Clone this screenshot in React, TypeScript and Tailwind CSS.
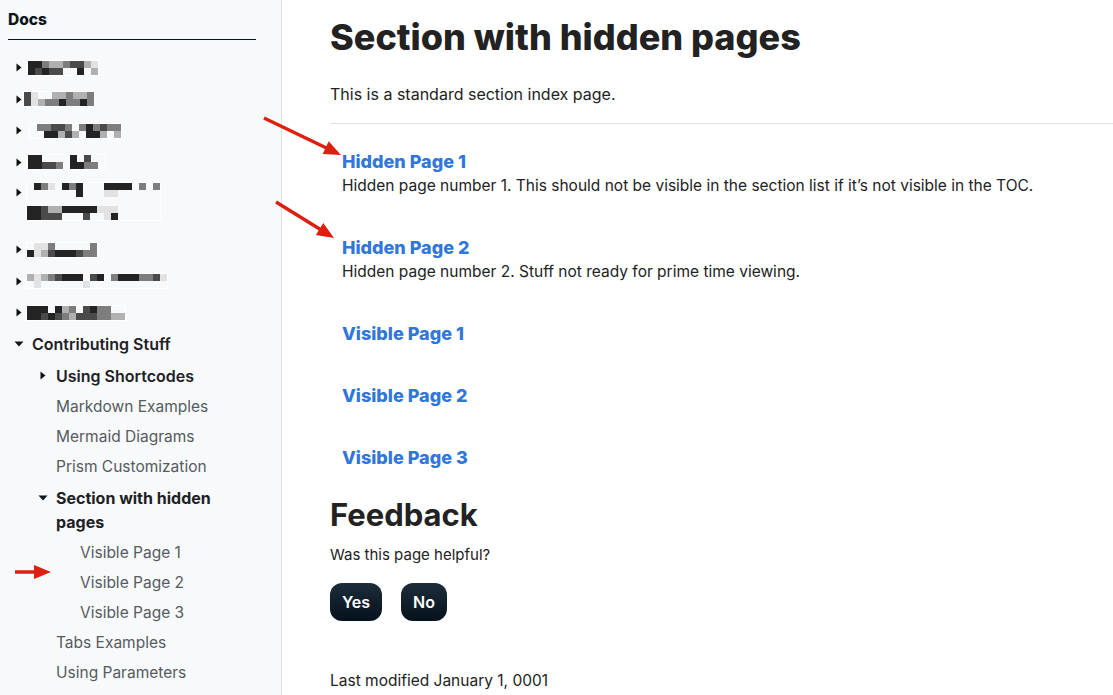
import React from "react";

const shade: Record<string, string> = {
  "0": "bg-transparent",
  "1": "bg-[#232323]",
  "2": "bg-[#4a4a4a]",
  "3": "bg-[#7d7d7d]",
  "4": "bg-[#b0b0b0]",
  "5": "bg-[#e2e2e2]",
};

// pixelated (redacted) nav labels
function Redacted({ rows, className = "" }: { rows: string[]; className?: string }) {
  return (
    <div className={`inline-flex flex-col border border-white ${className}`}>
      {rows.map((r, i) => (
        <div key={i} className="flex">
          {r.split("").map((c, j) => (
            <div key={j} className={`h-[7px] w-[7px] ${shade[c]}`} />
          ))}
        </div>
      ))}
    </div>
  );
}

function CaretRight({ className = "" }: { className?: string }) {
  return (
    <svg width="6" height="9" viewBox="0 0 6 9" className={className}>
      <path d="M0.5 0.5 L5.5 4.5 L0.5 8.5 Z" fill="#111" />
    </svg>
  );
}

function CaretDown({ className = "" }: { className?: string }) {
  return (
    <svg width="10" height="6" viewBox="0 0 10 6" className={className}>
      <path d="M0.5 0.5 L9.5 0.5 L5 5.5 Z" fill="#0b1520" />
    </svg>
  );
}

const hidden = [
  { rows: ["1134432245", "1212200104"], x: "ml-[5px]" },
  { rows: ["2500443443", "2543313313"], x: "ml-[1px]" },
  { rows: ["0332230313233", "0011424011404"], x: "ml-[7px]" },
  { rows: ["11000010200", "11223011330"], x: "ml-[5px]" },
];

const hidden2 = [
  { rows: ["0553000003", "1542111233"] },
  { rows: ["45432111021031113325", "05000000500000000000"] },
  { rows: ["11101430213300", "11212342223344"] },
];

// arrow: line from (x1,y1) with a filled head ending at (x2,y2)
function Arrow({ x1, y1, x2, y2 }: { x1: number; y1: number; x2: number; y2: number }) {
  const dx = x2 - x1;
  const dy = y2 - y1;
  const len = Math.hypot(dx, dy);
  const ux = dx / len;
  const uy = dy / len;
  const hl = 17;
  const hw = 7;
  const bx = x2 - ux * hl;
  const by = y2 - uy * hl;
  const pts = `${x2},${y2} ${bx - uy * hw},${by + ux * hw} ${bx + uy * hw},${by - ux * hw}`;
  return (
    <g>
      <line x1={x1} y1={y1} x2={bx + ux * 2} y2={by + uy * 2} stroke="#dd1f10" strokeWidth="3.5" />
      <polygon points={pts} fill="#dd1f10" />
    </g>
  );
}

export default function App() {
  const font = { fontFamily: "Inter, 'Noto Sans', sans-serif" };
  return (
    <div className="relative flex h-[695px] w-[1113px] overflow-hidden bg-white text-[#222]" style={font}>
      {/* Sidebar */}
      <aside className="w-[282px] shrink-0 border-r border-[#dee2e6] bg-[#f8f9fa] pl-2 pr-[25px]">
        <div className="border-b border-[#0b1520] pb-[8px] pt-[9px] text-[15.5px] font-extrabold leading-[22px] text-[#0b1520]">
          Docs
        </div>
        <ul className="mt-[12px]">
          {hidden.map((h, i) => (
            <li key={i} className="flex h-[31.5px] items-center pl-[8px]">
              <CaretRight />
              <Redacted rows={h.rows} className={h.x} />
            </li>
          ))}
          <li className="flex h-[56px] items-start pl-[8px] pt-[4px]">
            <CaretRight className="mt-[6px]" />
            <div className="ml-[4px] flex flex-col gap-[9px] border border-white">
              <Redacted rows={["0135013100011110303", "0000000100055000000"]} className="border-0" />
              <Redacted rows={["1124411111555", "1122200020051"]} className="border-0" />
            </div>
          </li>
          {hidden2.map((h, i) => (
            <li key={i} className="flex h-[31.5px] items-center pl-[8px]">
              <CaretRight />
              <Redacted rows={h.rows} className="ml-[4px]" />
            </li>
          ))}
          <li className="flex h-[31.5px] items-center pl-[6px] text-[16px] font-semibold text-[#1d2125]">
            <CaretDown />
            <span className="ml-[8px]">Contributing Stuff</span>
          </li>
          <li className="flex h-[31.5px] items-center pl-[32px] text-[16px] font-semibold text-[#1d2125]">
            <CaretRight />
            <span className="ml-[10px]">Using Shortcodes</span>
          </li>
          {["Markdown Examples", "Mermaid Diagrams", "Prism Customization"].map((t) => (
            <li key={t} className="flex h-[30px] items-center pl-[48px] text-[15.5px] text-[#555b61]">
              {t}
            </li>
          ))}
          <li className="flex items-start pl-[30px] pt-[4px] pb-[4px] text-[16px] font-bold leading-[24px] text-[#1d2125]">
            <CaretDown className="mt-[9px]" />
            <span className="ml-[8px]">
              Section with hidden
              <br />
              pages
            </span>
          </li>
          {["Visible Page 1", "Visible Page 2", "Visible Page 3"].map((t) => (
            <li key={t} className="flex h-[30px] items-center pl-[72px] text-[15.5px] text-[#555b61]">
              {t}
            </li>
          ))}
          {["Tabs Examples", "Using Parameters"].map((t) => (
            <li key={t} className="flex h-[30px] items-center pl-[48px] text-[15.5px] text-[#555b61]">
              {t}
            </li>
          ))}
        </ul>
      </aside>

      {/* Main */}
      <main className="flex-1 pl-[48px]">
        <h1 className="pt-[14px] text-[36px] font-extrabold leading-[46px] text-[#222]">
          Section with hidden pages
        </h1>
        <p className="mt-[22px] text-[16px] leading-[24px]">This is a standard section index page.</p>
        <hr className="mt-[17px] border-[#e2e2e2]" />
        <div className="pl-[12px]">
          <div className="mt-[26px]">
            <a className="text-[18px] font-extrabold leading-[24px] text-[#3176d9]">Hidden Page 1</a>
            <p className="text-[15.5px] leading-[24px]">
              Hidden page number 1. This should not be visible in the section list if it’s not visible in the TOC.
            </p>
          </div>
          <div className="mt-[38px]">
            <a className="text-[18px] font-extrabold leading-[24px] text-[#3176d9]">Hidden Page 2</a>
            <p className="text-[15.5px] leading-[24px]">Hidden page number 2. Stuff not ready for prime time viewing.</p>
          </div>
          <div className="mt-[38px] text-[18px] font-extrabold leading-[24px] text-[#3176d9]">Visible Page 1</div>
          <div className="mt-[38px] text-[18px] font-extrabold leading-[24px] text-[#3176d9]">Visible Page 2</div>
          <div className="mt-[38px] text-[18px] font-extrabold leading-[24px] text-[#3176d9]">Visible Page 3</div>
        </div>
        <h2 className="mt-[25px] text-[31px] font-bold leading-[40px] text-[#222]">Feedback</h2>
        <p className="mt-[9px] text-[15px] leading-[22px]">Was this page helpful?</p>
        <div className="mt-[17px] flex gap-[19px]">
          <button className="h-[38px] rounded-[12px] bg-gradient-to-b from-[#1e2d3b] to-[#05121d] px-[12px] text-[16px] font-semibold text-white">
            Yes
          </button>
          <button className="h-[38px] rounded-[12px] bg-gradient-to-b from-[#1e2d3b] to-[#05121d] px-[12px] text-[16px] font-semibold text-white">
            No
          </button>
        </div>
        <p className="mt-[48px] text-[15.5px] leading-[24px]">Last modified January 1, 0001</p>
      </main>

      {/* red annotation arrows */}
      <svg className="pointer-events-none absolute left-0 top-0" width="1113" height="695">
        <Arrow x1={264} y1={118} x2={341} y2={155} />
        <Arrow x1={276} y1={202} x2={334} y2={238} />
        <Arrow x1={15} y1={572} x2={51} y2={572} />
      </svg>
    </div>
  );
}
